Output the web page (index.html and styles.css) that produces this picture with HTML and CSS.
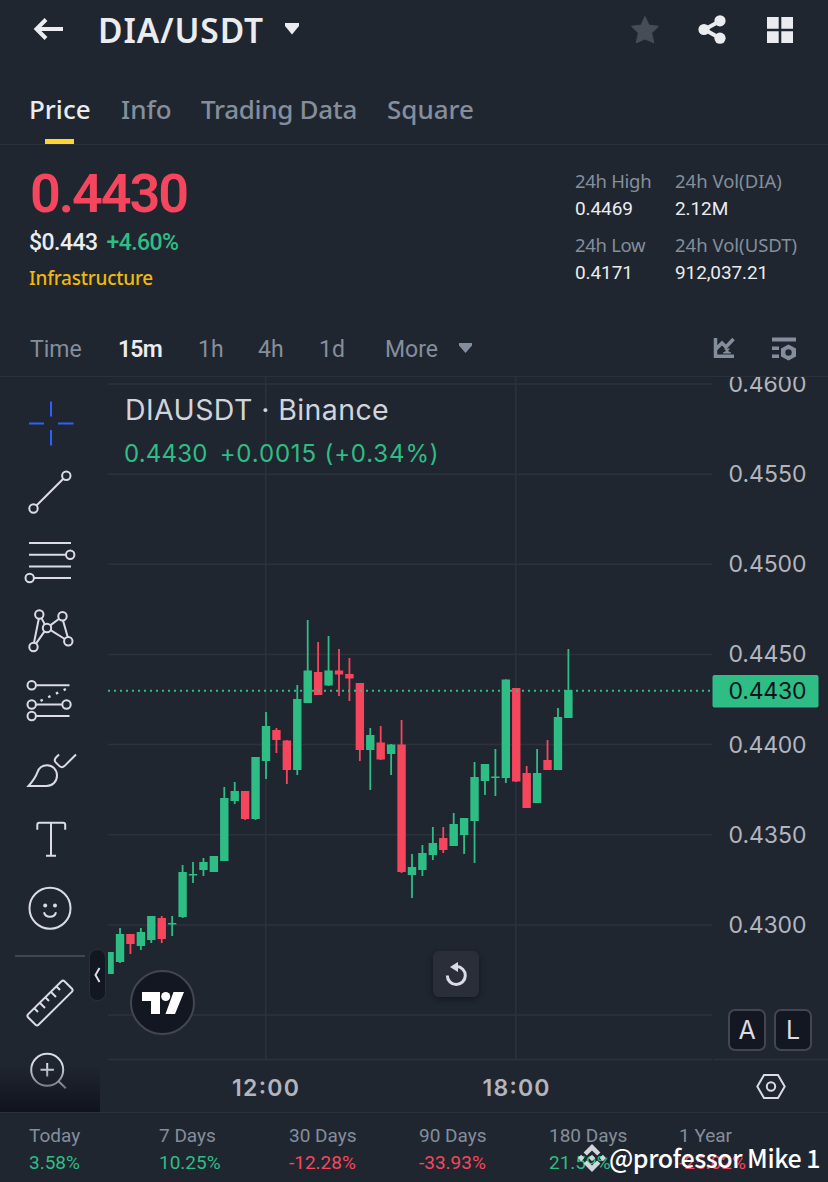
FILE: index.html
```html
<!DOCTYPE html>
<html lang="en">
<head>
  <meta charset="UTF-8">
  <meta name="viewport" content="width=device-width, initial-scale=1.0">
  <title>DIA/USDT</title>
  <link rel="stylesheet" href="styles.css">
</head>
<body>
  <header class="topbar">
    <svg class="back" width="32" height="26" viewBox="0 0 32 26"><path d="M13 2.500L3.500 12l9.500 9.500M4.500 12h25.500"/></svg>
    <h1>DIA/USDT</h1>
    <svg class="caret" width="16" height="12" viewBox="0 0 16 12"><path d="M1 0h14v3L8 11.500 1 3z"/></svg>
    <div class="actions">
      <svg width="30" height="30" viewBox="0 0 30 30"><path class="star" d="M15 1.500l3.900 8.600 9.600 1.200-6.900 6.600 2.200 9.900L15 24l-8.800 3.800 2.200-9.900-6.900-6.600 9.600-1.200z"/></svg>
      <svg width="30" height="30" viewBox="0 0 30 30"><path class="share-line" d="M22 6L6.500 14.500 22 23.200"/><circle cx="22" cy="5.800" r="5.600"/><circle cx="6" cy="14.500" r="5.600"/><circle cx="22" cy="23.200" r="5.600"/></svg>
      <svg width="30" height="30" viewBox="0 0 30 30"><path d="M2 2h11.700v11.700H2zM16.300 2H28v11.700H16.300zM2 16.300h11.700V28H2zM16.300 16.300H28V28H16.300z"/></svg>
    </div>
  </header>

  <nav class="tabs">
    <span class="tab active">Price</span>
    <span class="tab info">Info</span>
    <span class="tab trading">Trading Data</span>
    <span class="tab square">Square</span>
  </nav>

  <section class="summary">
    <div>
      <div class="last-price">0.4430</div>
      <div class="change"><span>$0.443</span><span class="up">+4.60%</span></div>
      <div class="category">Infrastructure</div>
    </div>
    <dl class="stats">
      <div><dt>24h High</dt><dd>0.4469</dd></div>
      <div><dt>24h Vol(DIA)</dt><dd>2.12M</dd></div>
      <div><dt>24h Low</dt><dd>0.4171</dd></div>
      <div><dt>24h Vol(USDT)</dt><dd>912,037.21</dd></div>
    </dl>
  </section>

  <nav class="intervals">
    <span class="iv-time">Time</span>
    <span class="iv-15m active">15m</span>
    <span class="iv-1h">1h</span>
    <span class="iv-4h">4h</span>
    <span class="iv-1d">1d</span>
    <span class="iv-more">More</span>
    <svg class="more-caret" width="14" height="11" viewBox="0 0 14 11"><path d="M0 0h13v2.500L6.500 10 0 2.500z"/></svg>
    <div class="interval-tools">
      <svg width="24" height="24" viewBox="0 0 24 24"><path class="thin" d="M3.500 1v18.300H22M4 12l6-6 4 4 7.500-8"/><path d="M12 11.500h6l-2 2.500 3 1.500v1h-8v-1l3-1.500z"/></svg>
      <svg width="26" height="26" viewBox="0 0 26 26"><path d="M1 1.500h24v4H1zM1 10.500h7V14H1zM1 18.500h7V22H1z"/><path fill-rule="evenodd" d="M17.500 8.500l7.500 4v8l-7.500 4-7.500-4v-8zM17.500 13.300a3.200 3.200 0 1 0 0 6.400a3.200 3.200 0 1 0 0-6.400z"/></svg>
    </div>
  </nav>

  <main class="workspace">
    <aside class="toolbar">
      <svg class="tool cross" viewBox="0 0 56 56"><path d="M29 6.500v15M29 35v15.500M7 28.500h15M36 28.500h15.500"/></svg>
      <svg class="tool" viewBox="0 0 56 56"><circle cx="44.300" cy="11.700" r="4.200"/><circle cx="11.500" cy="44.500" r="4.200"/><path d="M14.500 41.500l26.800-26.800"/></svg>
      <svg class="tool" viewBox="0 0 56 56"><path d="M7 9h42M7 20.700h37M7 32.400h42M12 44h37"/><circle cx="48.200" cy="20.700" r="4.200"/><circle cx="7.700" cy="44" r="4.200"/></svg>
      <svg class="tool" viewBox="0 0 56 56"><path d="M16.800 15.700L12 39.800M19.500 15.100l3.300 6.300M28.300 22.400l8.800-6.700M22.500 28.400L14 40.600M28.600 27.200l14.200 8.800M41 17.500l4.700 16.600"/><circle cx="17.300" cy="11.500" r="4.200"/><circle cx="40.500" cy="13.300" r="4.200"/><circle cx="25" cy="25" r="4.200"/><circle cx="11.500" cy="44" r="4.200"/><circle cx="46.300" cy="38.300" r="4.200"/></svg>
      <svg class="tool" viewBox="0 0 56 56"><path d="M14 13.200h33.500M14 32.500h26M14 44h33.500"/><path class="dots" d="M18.500 28.800L45 16.500"/><circle cx="9.700" cy="13.200" r="4.200"/><circle cx="9.700" cy="32.500" r="4.200"/><circle cx="44.500" cy="32.500" r="4.200"/><circle cx="9.700" cy="44" r="4.200"/></svg>
      <svg class="tool" viewBox="0 0 56 56"><path d="M6.500 44H24.500c6 0 10.500-4.500 10.500-10.500S30.500 23.200 25 23.200c-4.500 0-8 2.500-9.500 7C13.500 35.700 9.500 40.700 6.500 44z"/><path d="M37 12.500l-3 3c-1.600 1.700-1.700 3.300-.3 4.900l3.800 3.700c1.600 1.500 3.300 1.500 4.900 0L54 12.500"/></svg>
      <svg class="tool" viewBox="0 0 56 56"><path d="M15.300 18.800v-5c0-1.300.8-2 2-2h23.900c1.200 0 2 .7 2 2v5M29 11.800v33M24 44.800h10"/></svg>
      <svg class="tool" viewBox="0 0 56 56"><circle cx="28" cy="28.300" r="20.500"/><circle class="eye" cx="23.200" cy="25.400" r="2"/><circle class="eye" cx="33" cy="25.400" r="2"/><path d="M22 32.300c1.300 6 10.700 6 12 0"/></svg>
      <hr>
      <svg class="tool" viewBox="0 0 56 56"><path d="M39.500 6.200q1.500-1.200 3 0l7.500 7.500q1.200 1.500 0 3L16.500 49.800q-1.500 1.200-3 0L6 42.300q-1.200-1.500 0-3zM12.500 33.500l3.500 3.500M18 28l5 5M23.500 22.500l3.500 3.500M29 17l5 5M34.500 11.500l3.500 3.500"/></svg>
      <svg class="tool" viewBox="0 0 56 56"><path d="M18.500 25.800h13.400M25.200 19.100v13.400M36.500 37.300l7.300 7"/><circle cx="25.200" cy="25.800" r="16"/></svg>
    </aside>

    <section class="chart">
      <svg id="plot" width="728" height="735" viewBox="100 377 728 735">
        <g id="grid"></g>
        <g id="candles"></g>
        <path class="price-line" d="M108 690.800H712"/>
        <g id="scale"></g>
        <rect class="price-tag" x="712.500" y="675" width="106" height="32.500" rx="2"/>
        <text class="tag-text" x="728.500" y="699" textLength="78">0.4430</text>
        <text class="hour" x="265.500" y="1095.500" text-anchor="middle" textLength="67">12:00</text>
        <text class="hour" x="516" y="1095.500" text-anchor="middle" textLength="67">18:00</text>
        <path class="gear" d="M764 1075h14l6.700 11.500-6.700 11.500h-14l-6.700-11.500z"/>
        <circle class="gear" cx="771" cy="1086.500" r="4.200"/>
      </svg>
      <div class="legend">
        <div class="symbol">DIAUSDT · Binance</div>
        <div class="ohlc"><span>0.4430</span><span class="diff">+0.0015 (+0.34%)</span></div>
      </div>
      <div class="collapse"><svg width="8" height="16" viewBox="0 0 8 16"><path d="M5.500 1L1.500 8l4 7"/></svg></div>
      <div class="tv-logo"><svg width="42" height="22" viewBox="0 0 42 22"><path d="M0 0h18v22h-9V9H0zM31.500 0H42l-9 22H23.500z"/><circle cx="23.700" cy="4.500" r="4.500"/></svg></div>
      <div class="reset"><svg width="24" height="26" viewBox="0 0 24 26"><path d="M3.300 14.500a9 9 0 1 0 9.200-9"/><path class="head" d="M6 6L14 1v10z"/></svg></div>
      <div class="scale-modes"><span>A</span><span>L</span></div>
    </section>
  </main>

  <footer class="returns">
    <div><span>Today</span><b class="up">3.58%</b></div>
    <div><span>7 Days</span><b class="up">10.25%</b></div>
    <div><span>30 Days</span><b class="down">-12.28%</b></div>
    <div><span>90 Days</span><b class="down">-33.93%</b></div>
    <div><span>180 Days</span><b class="up">21.59%</b></div>
    <div><span>1 Year</span><b class="down">-25.02%</b></div>
  </footer>

  <div class="watermark">
    <svg width="28" height="28" viewBox="0 0 28 28"><path d="M14 0l8.400 8.400-3.200 3.200L14 6.400l-5.200 5.200-3.200-3.200zM14 28l-8.400-8.400 3.200-3.200 5.200 5.200 5.200-5.200 3.200 3.200zM14 10.800l3.200 3.200-3.200 3.200-3.200-3.200zM3.200 10.800L6.400 14l-3.200 3.200L0 14zM24.800 10.800L28 14l-3.200 3.200-3.200-3.200z"/></svg>
    <span>@professor Mike 1</span>
  </div>

  <script>
    // [up, high, bodyTop, bodyBottom, low]
    const candles = [
      [1, 952, 952, 974, 974], [1, 928, 934, 962, 963], [0, 934, 934, 944, 954],
      [1, 928, 932, 946, 950], [1, 916, 916, 940, 943], [0, 916, 918, 939, 943],
      [1, 916, 923, 924.5, 936], [1, 865, 872, 917, 918], [1, 862, 874, 875.5, 883],
      [1, 858, 862, 870, 876], [1, 856, 856, 872, 872], [1, 787, 798, 861, 861],
      [1, 782, 791, 801, 804], [0, 791, 791, 819, 820], [1, 757, 757, 819, 820],
      [1, 712, 726, 761, 779], [0, 728, 730, 740, 753], [0, 740, 740.5, 770, 784],
      [1, 685, 699, 770, 775], [1, 620, 670.5, 703, 703], [0, 642, 672, 695, 695],
      [1, 636, 670.5, 685.5, 686], [0, 649, 670.5, 674.5, 696], [0, 658, 674, 678.5, 701],
      [0, 683, 683, 750, 761], [1, 728, 735, 750, 790], [0, 726, 742.5, 759.5, 760],
      [1, 744, 744.5, 754, 775], [0, 720, 744.5, 872, 873], [1, 854, 867, 875, 898],
      [1, 845, 853, 870, 876], [1, 827, 843, 855, 860], [0, 827, 838, 850, 853],
      [1, 813, 824, 846, 846], [1, 818, 818, 835, 854], [1, 762, 777, 821, 863],
      [1, 764, 764, 781, 795], [1, 749, 776.5, 778, 796], [1, 679.5, 679.5, 778, 783],
      [0, 688, 688, 781.5, 782], [0, 766, 773, 808, 808], [1, 749, 773, 803, 803],
      [0, 740, 760, 770, 770], [1, 708, 717, 770, 770], [1, 649, 690, 718, 718]
    ];

    let bars = '';
    candles.forEach(([up, high, top, bottom, low], i) => {
      const x = 109.6 + i * 10.427;
      const left = Math.max(108, x - 4.2);
      const cls = up ? 'bar-up' : 'bar-down';
      bars += `<g class="${cls}"><rect x="${left}" y="${top}" width="${x + 4.2 - left}" height="${bottom - top}"/>`;
      if (i > 0) bars += `<rect x="${x - 0.9}" y="${high}" width="1.8" height="${low - high}"/>`;
      bars += '</g>';
    });
    document.getElementById('candles').innerHTML = bars;

    let lines = '';
    let labels = '';
    for (let i = 0; i < 8; i++) {
      const y = 384 + i * 90.15;
      lines += `<path d="M108 ${y}H712"/>`;
      if (i < 7) {
        labels += `<text x="728.5" y="${y + 8}" textLength="78">${(0.46 - i * 0.005).toFixed(4)}</text>`;
      }
    }
    lines += '<path d="M265.8 377V1059M515.8 377V1059M108 1059.5H712M714 1059.5H828"/>';
    document.getElementById('grid').innerHTML = lines;
    document.getElementById('scale').innerHTML = labels;
  </script>
</body>
</html>
```
FILE: styles.css
```css
* {
  box-sizing: border-box;
}

body {
  margin: 0;
  width: 828px;
  height: 1182px;
  position: relative;
  overflow: hidden;
  background-color: #202630;
  color: #eaecef;
  font-family: Roboto, sans-serif;
}

svg {
  display: block;
  flex: none;
}

.up {
  color: #2ebd85;
}

.down {
  color: #f6465d;
}

.topbar {
  display: flex;
  align-items: center;
  height: 60px;
  padding: 0 33px;
}

.back {
  fill: none;
  stroke: #eaecef;
  stroke-width: 4;
}

.topbar h1 {
  width: 168px;
  margin: 0 0 0 33px;
  font: 600 33.500px/60px "Noto Sans", sans-serif;
  letter-spacing: 0.9px;
  white-space: nowrap;
}

.caret {
  margin: -2px 0 0 18px;
  fill: #eaecef;
}

.actions {
  display: flex;
  gap: 37.5px;
  margin-left: auto;
  fill: #eaecef;
}

.star {
  fill: #474d57;
  stroke: #474d57;
}

.share-line {
  fill: none;
  stroke: #eaecef;
  stroke-width: 4;
}

.tabs {
  display: flex;
  height: 85px;
  padding: 14px 30px 0 29px;
  border-bottom: 1px solid #2b313b;
  font: 500 26px/70px "Noto Sans", sans-serif;
  color: #848e9c;
}

.tab {
  white-space: nowrap;
}

.tab.active {
  width: 61px;
  margin-right: 31px;
  color: #eaecef;
}

.tab.active::after {
  content: "";
  display: block;
  width: 29px;
  height: 5px;
  margin: -5px auto 0;
  background-color: #fcd535;
}

.tab.info {
  width: 51px;
  margin-right: 29px;
}

.tab.trading {
  width: 156px;
  margin-right: 30px;
  letter-spacing: -0.3px;
}

.summary {
  display: flex;
  justify-content: space-between;
  height: 177px;
  padding: 17px 0 0 29px;
}

.last-price {
  height: 63px;
  padding-left: 1px;
  font-size: 54px;
  font-weight: 600;
  line-height: 64px;
  letter-spacing: -2.1px;
  color: #f6465d;
}

.change {
  display: flex;
  gap: 9px;
  height: 35px;
  font-size: 23px;
  font-weight: 500;
  line-height: 36px;
  letter-spacing: -0.550px;
}

.category {
  font: 500 19px/36px "Noto Sans", sans-serif;
  letter-spacing: -0.250px;
  color: #f0b90b;
}

.stats {
  display: grid;
  grid-template-columns: 100px 153px;
  grid-template-rows: 63.5px 63.5px;
  margin: 5px 0 0;
}

.stats dt {
  font: 400 18.5px/28px "Noto Sans", sans-serif;
  color: #848e9c;
  white-space: nowrap;
}

.stats div:nth-child(odd) dt {
  letter-spacing: -0.300px;
}

.stats dd {
  margin: 0;
  font-size: 19px;
  line-height: 28px;
  letter-spacing: -0.100px;
}

.intervals {
  display: flex;
  align-items: center;
  height: 55px;
  padding: 0 31px 0 30px;
  border-bottom: 1px solid #2b313b;
  font-size: 23px;
  color: #848e9c;
}

.intervals .active {
  font-weight: 600;
  letter-spacing: -0.800px;
  color: #eaecef;
}

.iv-time {
  width: 88px;
}

.iv-15m {
  width: 80px;
}

.iv-1h {
  width: 60px;
}

.iv-4h {
  width: 61px;
}

.iv-1d {
  width: 66px;
}

.iv-more {
  width: 74px;
}

.more-caret {
  margin-top: -2px;
  fill: #848e9c;
}

.interval-tools {
  display: flex;
  align-items: center;
  gap: 35px;
  margin-left: auto;
  fill: #848e9c;
}

.thin {
  fill: none;
  stroke: #848e9c;
  stroke-width: 3.500;
}

.workspace {
  display: flex;
  height: 735px;
}

.toolbar {
  position: relative;
  display: flex;
  flex-direction: column;
  width: 100px;
  padding-top: 11.500px;
}

.toolbar::after {
  content: "";
  position: absolute;
  left: 0;
  right: 0;
  bottom: 0;
  height: 48px;
  background: linear-gradient(rgba(16, 19, 29, 0), #10131d);
}

.tool {
  width: 56px;
  height: 56px;
  margin: 6.660px 22px;
  fill: none;
  stroke: #dbdbe6;
  stroke-width: 2;
}

.tool.cross {
  stroke: #2962ff;
}

.tool .dots {
  stroke-width: 2.400;
  stroke-dasharray: 2.500 6;
}

.tool .eye {
  fill: #dbdbe6;
  stroke: none;
}

.toolbar hr {
  width: 70px;
  height: 2px;
  margin: 11.500px 15px;
  border: 0;
  background-color: #434651;
}

.chart {
  position: relative;
  width: 728px;
  font-family: Inter, sans-serif;
}

#grid {
  stroke: #2c323c;
  stroke-width: 1.500;
}

.bar-up {
  fill: #2ebd85;
}

.bar-down {
  fill: #f6465d;
}

.price-line {
  stroke: #2ebd85;
  stroke-width: 2;
  stroke-dasharray: 2 4;
}

#scale text {
  font-size: 23px;
  fill: #b2b5be;
}

.price-tag {
  fill: #2ebd85;
}

.tag-text {
  font-size: 23px;
  fill: #10131d;
}

.hour {
  font-size: 23px;
  font-weight: 600;
  fill: #b2b5be;
}

.gear {
  fill: none;
  stroke: #dbdbe6;
  stroke-width: 2;
}

.legend {
  position: absolute;
  top: 12px;
  left: 24px;
}

.symbol {
  padding-left: 1px;
  font-size: 28.500px;
  line-height: 42px;
  letter-spacing: 0.400px;
  color: #d1d4dc;
}

.ohlc {
  display: flex;
  gap: 12px;
  font-size: 24px;
  line-height: 45px;
  letter-spacing: 0.200px;
  color: #2ebd85;
}

.diff {
  letter-spacing: 0.850px;
}

.collapse {
  position: absolute;
  top: 573px;
  left: -10px;
  display: flex;
  align-items: center;
  justify-content: center;
  width: 15px;
  height: 50px;
  border-radius: 7px;
  background-color: #131722;
  box-shadow: 0 0 0 1px #2a2e39;
}

.collapse path {
  fill: none;
  stroke: #dbdbe6;
  stroke-width: 2;
}

.tv-logo {
  position: absolute;
  top: 593px;
  left: 30px;
  display: flex;
  align-items: center;
  justify-content: center;
  width: 65px;
  height: 65px;
  border: 2px solid #434651;
  border-radius: 50%;
  background-color: #131722;
  fill: #fff;
}

.tv-logo svg {
  margin-top: 1px;
}

.reset {
  position: absolute;
  top: 574px;
  left: 333px;
  display: flex;
  align-items: center;
  justify-content: center;
  width: 46px;
  height: 46px;
  border-radius: 6px;
  background-color: #2a2e39;
  box-shadow: 0 2px 6px rgba(0, 0, 0, 0.4);
}

.reset path {
  fill: none;
  stroke: #dbdbe6;
  stroke-width: 3;
}

.reset .head {
  fill: #dbdbe6;
  stroke: none;
}

.scale-modes {
  position: absolute;
  top: 632px;
  left: 628px;
  display: flex;
  gap: 8px;
}

.scale-modes span {
  width: 38px;
  height: 42px;
  border: 2px solid #434651;
  border-radius: 7px;
  background-color: #131722;
  font-size: 25px;
  line-height: 39px;
  text-align: center;
  color: #dbdbe6;
}

.returns {
  display: grid;
  grid-template-columns: repeat(6, 130px);
  height: 70px;
  padding: 9px 0 0 29px;
  border-top: 1px solid #2b313b;
  white-space: nowrap;
}

.returns span,
.returns b {
  display: block;
  font-size: 19px;
  font-weight: 400;
  line-height: 27px;
}

.returns span {
  color: #848e9c;
}

.watermark {
  position: absolute;
  left: 578px;
  top: 1140px;
  display: flex;
  align-items: center;
  gap: 3px;
  height: 36px;
  font: 500 25px/34px "Noto Sans CJK SC", sans-serif;
  letter-spacing: -0.450px;
  color: #fff;
  white-space: nowrap;
}

.watermark svg {
  fill: #d3d5db;
}

.watermark span {
  margin-top: -3px;
}
```
